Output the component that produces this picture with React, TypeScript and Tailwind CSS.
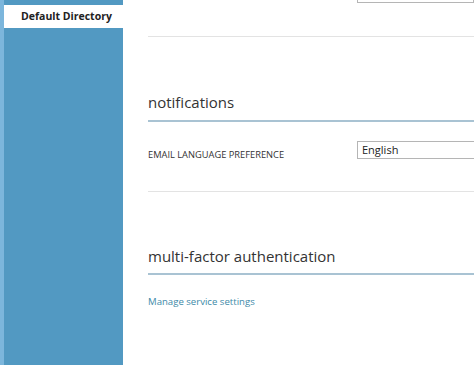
export default function App() {
  return (
    <div className="flex h-[365px] w-[474px] overflow-hidden bg-white" style={{ fontFamily: '"Open Sans", "Noto Sans", sans-serif' }}>
      <aside className="w-[123px] shrink-0 border-l-4 border-[#7cb6dc] bg-[#5299c2] pt-[5px]">
        <div className="flex h-[23px] items-center bg-white pl-[17px] text-[10.5px] font-bold text-[#222]">
          Default Directory
        </div>
      </aside>

      <main className="min-w-0 flex-1 pl-[25px]">
        <div className="mt-[-15px] flex h-[18px] items-end">
          <span className="w-[209px] text-[9px] text-[#333]">NAME</span>
          <div className="h-[18px] flex-1 border border-[#b5b5b5]" />
        </div>

        <div className="mt-[33px] h-px bg-[#e3e3e3]" />

        <h2 className="mt-[52px] h-[26px] text-[15px] leading-[26px] text-[#333]">notifications</h2>
        <div className="mt-[5px] h-[2px] bg-[#a9c3d3]" />

        <div className="mt-[19px] flex h-[18px]">
          <span className="mt-[8px] w-[209px] text-[9.3px] leading-[12px] text-[#333]">EMAIL LANGUAGE PREFERENCE</span>
          <div className="flex flex-1 items-center border border-[#b5b5b5] border-r-0 pl-[4px] text-[11px] text-[#222]">
            English
          </div>
        </div>

        <div className="mt-[32px] h-px bg-[#e3e3e3]" />

        <h2 className="mt-[51px] h-[26px] text-[15px] leading-[26px] text-[#333]">multi-factor authentication</h2>
        <div className="mt-[4px] h-[2px] bg-[#a9c3d3]" />

        <a className="mt-[20px] block text-[9.6px] leading-[14px] text-[#3d8aa8]">Manage service settings</a>
      </main>
    </div>
  );
}
